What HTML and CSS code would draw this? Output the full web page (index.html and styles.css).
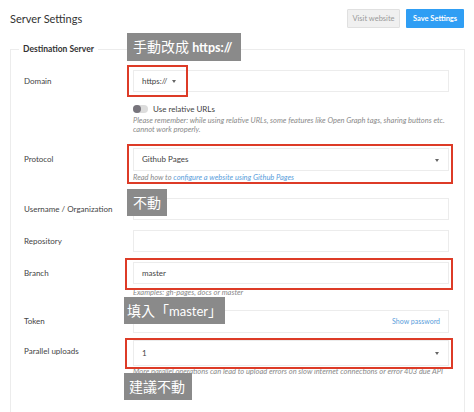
FILE: index.html
```html
<!DOCTYPE html>
<html lang="zh-Hant">
<head>
<meta charset="utf-8">
<title>Server Settings</title>
<link rel="stylesheet" href="styles.css">
</head>
<body>
<header class="header">
  <h1 class="title">Server Settings</h1>
  <div class="actions">
    <button class="btn btn-light">Visit website</button>
    <button class="btn btn-primary">Save Settings</button>
  </div>
</header>

<fieldset class="box">
  <legend class="legend">Destination Server</legend>

  <div class="row row-domain">
    <label class="label">Domain</label>
    <div class="field">
      <div class="input-group">
        <div class="proto">https://<span class="caret"></span></div>
        <div class="input-rest"></div>
      </div>
      <div class="mark mark-domain"></div>
      <div class="note note-domain">手動改成 <span class="note-latin">https://</span></div>
    </div>
  </div>

  <div class="row row-toggle">
    <span></span>
    <div class="field">
      <div class="switch-line"><span class="switch"><span class="knob"></span></span><span class="switch-label">Use relative URLs</span></div>
      <p class="help help-toggle">Please remember: while using relative URLs, some features like Open Graph tags, sharing buttons etc. cannot work properly.</p>
    </div>
  </div>

  <div class="row row-protocol">
    <label class="label label-select">Protocol</label>
    <div class="field">
      <div class="select">Github Pages<span class="caret"></span></div>
      <p class="help help-link">Read how to <a href="#" class="link">configure a website using Github Pages</a></p>
      <div class="mark mark-protocol"></div>
    </div>
  </div>

  <div class="row row-user">
    <label class="label">Username / Organization</label>
    <div class="field">
      <div class="input"></div>
      <div class="note note-user">不動</div>
    </div>
  </div>

  <div class="row row-repo">
    <label class="label">Repository</label>
    <div class="field">
      <div class="input"></div>
    </div>
  </div>

  <div class="row row-branch">
    <label class="label">Branch</label>
    <div class="field">
      <div class="input">master</div>
      <p class="help help-branch">Examples: gh-pages, docs or master</p>
      <div class="mark mark-branch"></div>
    </div>
  </div>

  <div class="row row-token">
    <label class="label">Token</label>
    <div class="field">
      <div class="input input-token"><span class="show">Show password</span></div>
      <div class="note note-token">填入「<span class="note-latin note-thin">master</span>」</div>
    </div>
  </div>

  <div class="row row-parallel">
    <label class="label label-select">Parallel uploads</label>
    <div class="field">
      <div class="select select-parallel">1<span class="caret"></span></div>
      <p class="help help-parallel">More parallel operations can lead to upload errors on slow internet connections or error 403 due API limits.</p>
      <div class="mark mark-parallel"></div>
      <div class="note note-parallel">建議不動</div>
    </div>
  </div>
</fieldset>
</body>
</html>
```

FILE: styles.css
```css
* { box-sizing: border-box; }

body {
  margin: 0;
  background: #fff;
  font-family: "Lato", "Noto Sans CJK TC", sans-serif;
  color: #444;
}

.header {
  display: flex;
  justify-content: space-between;
  align-items: center;
  padding: 8px 10px 0 10px;
  height: 28px;
}

.title {
  margin: 0;
  font-size: 11px;
  font-weight: 400;
  color: #333;
}

.actions {
  display: flex;
  gap: 6px;
}

.btn {
  height: 19px;
  padding: 0;
  font-family: "Lato", sans-serif;
  font-size: 7.5px;
  border-radius: 1px;
  border: 1px solid transparent;
  white-space: nowrap;
  text-align: center;
}

.btn-light {
  width: 53px;
  background: #f0f0f0;
  border-color: #e0e0e0;
  color: #9a9a9a;
}

.btn-primary {
  width: 58px;
  background: #2f9ef4;
  color: #fff;
  font-weight: 700;
}

.box {
  margin: 14px 9px 0 10px;
  padding: 0 15px 30px 13px;
  border: 1px solid #ececec;
  min-width: 0;
}

.legend {
  margin-left: -5px;
  padding: 0 4px;
  font-size: 8.5px;
  font-weight: 700;
  color: #333;
  line-height: 14px;
}

.row {
  display: grid;
  grid-template-columns: 109px 1fr;
}

.row-domain { margin-top: 14px; }
.row-toggle { margin-top: 12px; }
.row-protocol { margin-top: 14px; }
.row-user { margin-top: 16px; }
.row-repo { margin-top: 10px; }
.row-branch { margin-top: 10px; }
.row-token { margin-top: 13px; }
.row-parallel { margin-top: 7px; }

.label {
  font-size: 8px;
  color: #444;
  line-height: 22px;
}

.label-select { line-height: 23px; }

.field {
  position: relative;
  min-width: 0;
}

.input,
.input-group,
.select {
  height: 22px;
  border: 1px solid #ececec;
  background: #fff;
  font-size: 8px;
  color: #444;
  line-height: 20px;
  padding: 0 8px;
}

.select {
  height: 23px;
  line-height: 21px;
  position: relative;
}

.select-parallel {
  height: 26px;
  line-height: 24px;
}

.input-group {
  display: flex;
  padding: 0;
}

.proto {
  width: 52px;
  padding-left: 8px;
  position: relative;
}

.input-rest { flex: 1; }

.caret {
  position: absolute;
  right: 9px;
  top: 50%;
  margin-top: -1px;
  border-left: 2.5px solid transparent;
  border-right: 2.5px solid transparent;
  border-top: 3px solid #666;
}

.proto .caret { right: 10px; }

.switch-line {
  display: flex;
  align-items: center;
  height: 10px;
  gap: 5px;
}

.switch {
  position: relative;
  width: 15px;
  height: 8px;
  border-radius: 4px;
  background: #dcdcdc;
}

.knob {
  position: absolute;
  left: 0;
  top: 0;
  width: 8px;
  height: 8px;
  border-radius: 50%;
  background: #77747c;
}

.switch-label {
  font-size: 8px;
  color: #444;
}

.help {
  margin: 1px 0 0 0;
  font-size: 7.5px;
  font-style: italic;
  color: #8a8a8a;
  line-height: 9px;
}

.help-toggle { margin-top: 2px; }
.help-link { margin-top: 2px; }
.help-branch { margin-top: 4px; }
.help-parallel { margin-top: 1px; }

.link {
  color: #5a9edb;
  text-decoration: none;
}

.input-token {
  display: flex;
  justify-content: flex-end;
  height: 23px;
}

.show {
  font-size: 7px;
  color: #5a9edb;
  line-height: 21px;
}

.mark {
  position: absolute;
  border: 2px solid #dd3b27;
  pointer-events: none;
}

.mark-domain { left: -6px; top: -5px; width: 61px; height: 32px; }
.mark-protocol { left: -6px; top: -4px; right: -4px; height: 40px; }
.mark-branch { left: -8px; top: -4px; right: -4px; height: 32px; }
.mark-parallel { left: -8px; top: -2px; right: -4px; height: 31px; }

.note {
  position: absolute;
  background: #8a8a8a;
  color: #fff;
  font-size: 14px;
  line-height: 27px;
  height: 28px;
  padding: 0 6px;
  white-space: nowrap;
  font-family: "Noto Sans CJK TC", sans-serif;
  font-weight: 400;
}

.note-latin {
  font-family: "Lato", sans-serif;
  font-weight: 700;
  font-size: 12.5px;
}

.note-thin {
  font-weight: 400;
  font-size: 13px;
}

.note-domain { left: -6px; top: -37px; width: 114px; }
.note-user { left: -6px; top: -9px; width: 40px; height: 27px; }
.note-token { left: -9px; top: -13px; height: 27px; padding: 0 3px; }
.note-parallel { left: -9px; top: 33px; width: 68px; height: 27px; padding: 0 5px; }
```
